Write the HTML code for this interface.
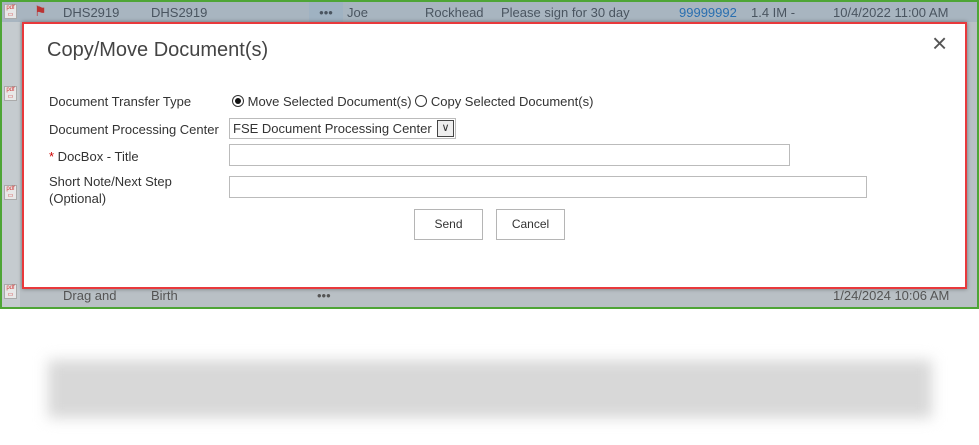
<!DOCTYPE html>
<html><head><meta charset="utf-8"><style>
*{box-sizing:border-box;margin:0;padding:0}
body{width:979px;height:445px;background:#fff;position:relative;overflow:hidden;font-family:"Liberation Sans",sans-serif;color:#333}
.bg{position:absolute;left:0;top:0;width:979px;height:309px;background:#b9c0c5;border:2px solid #4ea536}
.row{position:absolute;left:0;top:0;width:975px;height:20px;background:#a8b5c0;font-size:13px;color:#4a5560}
.row span,.row2 span{position:absolute;top:3px;white-space:nowrap}
.row2{position:absolute;left:0;top:283px;width:975px;height:20px;font-size:13px;color:#555}
.strip{position:absolute;left:0;top:0;width:18px;height:305px;background:#c5cbcf}
.pdf{position:absolute;left:2px;width:13px;height:15px;background:#e8e8e8;border:1px solid #aaa;font-size:6px;color:#c33;line-height:7px;text-align:center}
.dlg{position:absolute;left:22px;top:22px;width:945px;height:267px;background:#fff;border:2px solid #e8393c;box-shadow:0 0 4px rgba(0,0,0,.4)}
.t{position:absolute;left:23px;top:15px;font-size:20px;color:#444}
.x{position:absolute;left:908px;top:6px;font-size:26px;color:#555;line-height:26px}
.l{position:absolute;left:25px;font-size:13px;color:#333;line-height:17px}
.inp{position:absolute;background:#fff;border:1px solid #bbb;height:22px}
.btn{position:absolute;top:185px;height:31px;border:1px solid #b5b5b5;background:#fff;font-size:12px;color:#333;text-align:center;line-height:29px}
.rad{display:inline-block;width:12px;height:12px;border:1px solid #333;border-radius:50%;vertical-align:-1px;position:relative}
.rad.on:after{content:"";position:absolute;left:2px;top:2px;width:6px;height:6px;border-radius:50%;background:#111}
.blur{position:absolute;left:48px;top:360px;width:884px;height:58px;background:#d8d8d8;filter:blur(7px)}
</style></head><body>
<div class="bg">
<div class="strip"></div>
<div class="row">
<span style="left:32px;top:1px;color:#b33;font-size:14px">⚑</span>
<span style="left:61px">DHS2919</span><span style="left:149px">DHS2919</span>
<span style="left:307px;top:0;width:34px;height:20px;background:#9fb2c2;text-align:center;line-height:22px">•••</span>
<span style="left:345px">Joe</span><span style="left:423px">Rockhead</span>
<span style="left:499px">Please sign for 30 day</span>
<span style="left:677px;color:#2a6fb0">99999992</span><span style="left:749px">1.4 IM -</span>
<span style="left:831px">10/4/2022 11:00 AM</span>
</div>
<div class="pdf" style="top:2px">pdf<br>▭</div>
<div class="pdf" style="top:84px">pdf<br>▭</div>
<div class="pdf" style="top:183px">pdf<br>▭</div>
<div class="pdf" style="top:282px">pdf<br>▭</div>
<div class="row2"><span style="left:61px">Drag and</span><span style="left:149px">Birth</span><span style="left:315px">•••</span><span style="left:831px">1/24/2024 10:06 AM</span></div>
</div>
<div class="dlg">
<div class="t">Copy/Move Document(s)</div>
<div class="x">×</div>
<div class="l" style="top:69px">Document Transfer Type</div>
<div class="l" style="top:69px;left:208px"><span class="rad on"></span> Move Selected Document(s) <span class="rad"></span> Copy Selected Document(s)</div>
<div class="l" style="top:97px">Document Processing Center</div>
<div class="inp" style="left:205px;top:94px;width:227px;height:21px;font-size:13px;padding:2px 3px;color:#333">FSE Document Processing Center<span style="position:absolute;right:1px;top:1px;width:17px;height:17px;border:1px solid #444;background:#eee;text-align:center;line-height:14px;font-size:11px">&#x2228;</span></div>
<div class="l" style="top:124px"><span style="color:#c00">*</span> DocBox - Title</div>
<div class="inp" style="left:205px;top:120px;width:561px"></div>
<div class="l" style="top:149px">Short Note/Next Step<br>(Optional)</div>
<div class="inp" style="left:205px;top:152px;width:638px"></div>
<div class="btn" style="left:390px;width:69px">Send</div>
<div class="btn" style="left:472px;width:69px">Cancel</div>
</div>
<div class="blur"></div>
</body></html>
